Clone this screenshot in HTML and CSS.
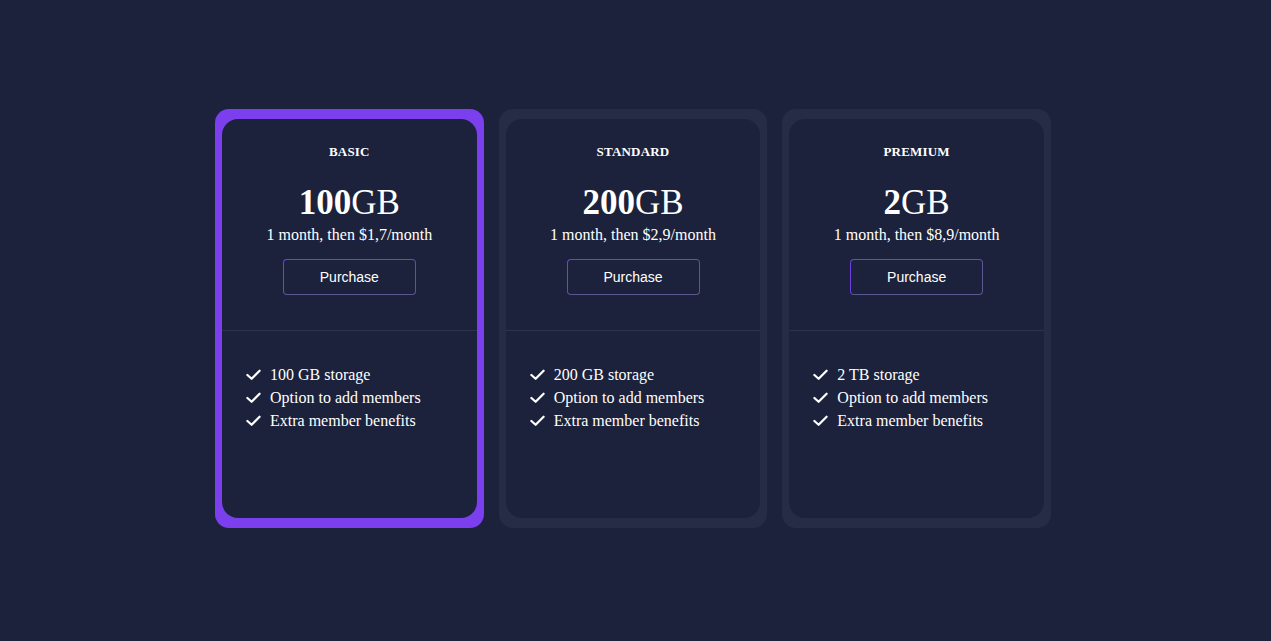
FILE: index.html
```html
<!DOCTYPE html>
<html lang="en">
<head>
<meta charset="utf-8">
<title>Pricing</title>
<link rel="stylesheet" href="styles.css">
</head>
<body>
<main class="plans">
  <section class="plan plan-active">
    <div class="plan-inner">
      <div class="plan-head">
        <h2 class="plan-name">BASIC</h2>
        <div class="plan-size"><b>100</b>GB</div>
        <p class="plan-price">1 month, then $1,7/month</p>
        <button class="plan-btn">Purchase</button>
      </div>
      <ul class="plan-features">
        <li><svg class="check" viewBox="0 0 16 12"><polyline points="1.5,6 6,10 14.5,1.5"/></svg>100 GB storage</li>
        <li><svg class="check" viewBox="0 0 16 12"><polyline points="1.5,6 6,10 14.5,1.5"/></svg>Option to add members</li>
        <li><svg class="check" viewBox="0 0 16 12"><polyline points="1.5,6 6,10 14.5,1.5"/></svg>Extra member benefits</li>
      </ul>
    </div>
  </section>
  <section class="plan">
    <div class="plan-inner">
      <div class="plan-head">
        <h2 class="plan-name">STANDARD</h2>
        <div class="plan-size"><b>200</b>GB</div>
        <p class="plan-price">1 month, then $2,9/month</p>
        <button class="plan-btn">Purchase</button>
      </div>
      <ul class="plan-features">
        <li><svg class="check" viewBox="0 0 16 12"><polyline points="1.5,6 6,10 14.5,1.5"/></svg>200 GB storage</li>
        <li><svg class="check" viewBox="0 0 16 12"><polyline points="1.5,6 6,10 14.5,1.5"/></svg>Option to add members</li>
        <li><svg class="check" viewBox="0 0 16 12"><polyline points="1.5,6 6,10 14.5,1.5"/></svg>Extra member benefits</li>
      </ul>
    </div>
  </section>
  <section class="plan">
    <div class="plan-inner">
      <div class="plan-head">
        <h2 class="plan-name">PREMIUM</h2>
        <div class="plan-size"><b>2</b>GB</div>
        <p class="plan-price">1 month, then $8,9/month</p>
        <button class="plan-btn">Purchase</button>
      </div>
      <ul class="plan-features">
        <li><svg class="check" viewBox="0 0 16 12"><polyline points="1.5,6 6,10 14.5,1.5"/></svg>2 TB storage</li>
        <li><svg class="check" viewBox="0 0 16 12"><polyline points="1.5,6 6,10 14.5,1.5"/></svg>Option to add members</li>
        <li><svg class="check" viewBox="0 0 16 12"><polyline points="1.5,6 6,10 14.5,1.5"/></svg>Extra member benefits</li>
      </ul>
    </div>
  </section>
</main>
</body>
</html>
```

FILE: styles.css
```css
html, body {
  margin: 0;
  padding: 0;
  background: #1c223b;
  color: #ffffff;
  font-family: "Liberation Serif", "Times New Roman", serif;
}

.plans {
  display: flex;
  justify-content: center;
  gap: 15px;
  padding: 109px 5px 0 0;
}

.plan {
  flex: 0 0 268.67px;
  height: 419px;
  box-sizing: border-box;
  padding: 10px 7px;
  background: #262c45;
  border-radius: 14px;
}

.plan-active {
  background: #7b3fed;
}

.plan-inner {
  height: 100%;
  background: #1c223b;
  border-radius: 16px;
  box-sizing: border-box;
  padding-top: 25px;
}

.plan-head {
  display: flex;
  flex-direction: column;
  align-items: center;
  padding-bottom: 35px;
  border-bottom: 1px solid #2c3250;
}

.plan-name {
  margin: 0;
  font-size: 13px;
  line-height: 15px;
  font-weight: 700;
  letter-spacing: 0.2px;
}

.plan-size {
  margin-top: 27px;
  font-size: 35px;
  line-height: 34px;
  font-weight: 400;
}

.plan-size b {
  font-weight: 700;
}

.plan-price {
  margin: 5px 0 0;
  font-size: 16px;
  line-height: 20px;
}

.plan-btn {
  margin-top: 14px;
  width: 133px;
  height: 36px;
  background: transparent;
  color: #ffffff;
  font-family: "Liberation Sans", Arial, sans-serif;
  font-size: 14px;
  border: 1px solid #7040e0;
  border-right-color: #5b5890;
  border-bottom-color: #5b5890;
  border-radius: 4px;
  padding: 0;
}

.plan-features {
  list-style: none;
  margin: 0;
  padding: 32px 0 0 24px;
}

.plan-features li {
  display: flex;
  align-items: center;
  gap: 9px;
  font-size: 16px;
  line-height: 23px;
}

.check {
  width: 15px;
  height: 12px;
  fill: none;
  stroke: #ffffff;
  stroke-width: 2.4;
  stroke-linecap: round;
  stroke-linejoin: round;
  flex: none;
}
```
